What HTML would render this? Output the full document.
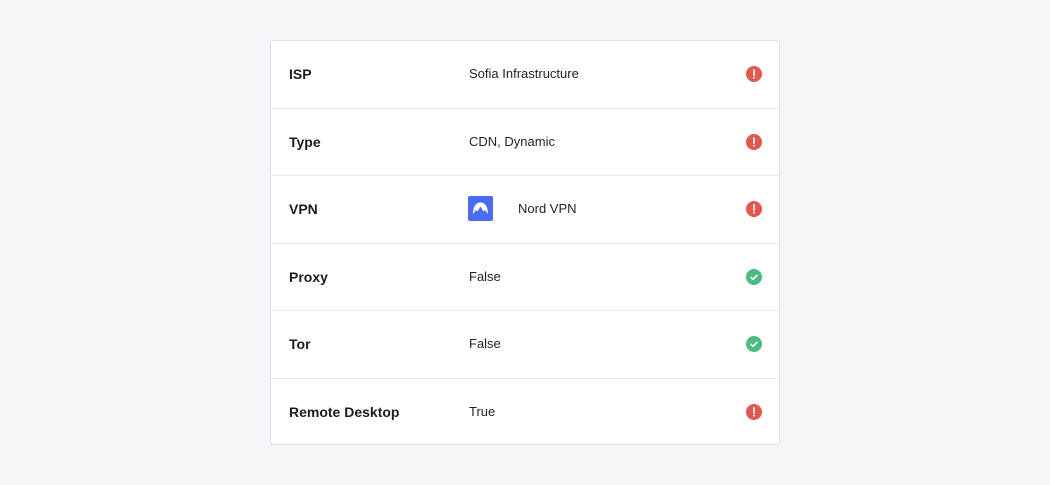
<!DOCTYPE html>
<html><head><style>
body{margin:0;width:1050px;height:485px;background:#f4f5f9;font-family:"Liberation Sans",sans-serif;position:relative;overflow:hidden}
.card{position:absolute;left:270px;top:40px;width:508px;height:403px;background:#fff;border:1px solid #dfe2ea;border-radius:4px}
.row{position:absolute;left:0;width:508px;height:66.5px;border-bottom:1px solid #e5e8f0}
.row:last-child{border-bottom:none}
.k{position:absolute;left:18px;top:0;line-height:66px;font-size:14px;font-weight:bold;color:#1b1d24}
.v{position:absolute;left:198px;top:0;line-height:66px;font-size:13px;color:#1f2128}
.ic{position:absolute;left:475px;top:25px;width:16px;height:16px;border-radius:50%}
.r{background:#e5574d}.g{background:#4cbb80}
.ic svg{position:absolute;left:0;top:0}
</style></head><body>
<div class="card">
<div class="row" style="top:0"><div class="k">ISP</div><div class="v">Sofia Infrastructure</div><div class="ic r"><svg width="16" height="16"><path d="M8 4v5" stroke="#fff" stroke-width="1.8" stroke-linecap="round"/><circle cx="8" cy="11.6" r="1" fill="#fff"/></svg></div></div>
<div class="row" style="top:67.5px"><div class="k">Type</div><div class="v">CDN, Dynamic</div><div class="ic r"><svg width="16" height="16"><path d="M8 4v5" stroke="#fff" stroke-width="1.8" stroke-linecap="round"/><circle cx="8" cy="11.6" r="1" fill="#fff"/></svg></div></div>
<div class="row" style="top:135px"><div class="k">VPN</div>
<div style="position:absolute;left:197px;top:20px;width:25px;height:25px;background:#4a6cf5;border-radius:2px"><svg width="25" height="25"><path d="M5 18 C5 10 8.5 6.5 12.5 6.5 C16.5 6.5 20 10 20 18 L17 14 L15.5 15.5 L12.5 10.5 L9.5 15.5 L8 14 Z" fill="#fff"/></svg></div>
<div class="v" style="left:247px">Nord VPN</div><div class="ic r"><svg width="16" height="16"><path d="M8 4v5" stroke="#fff" stroke-width="1.8" stroke-linecap="round"/><circle cx="8" cy="11.6" r="1" fill="#fff"/></svg></div></div>
<div class="row" style="top:202.5px"><div class="k">Proxy</div><div class="v">False</div><div class="ic g"><svg width="16" height="16"><path d="M5 8.3l2 2 4-4" stroke="#fff" stroke-width="1.6" fill="none" stroke-linecap="round" stroke-linejoin="round"/></svg></div></div>
<div class="row" style="top:270px"><div class="k">Tor</div><div class="v">False</div><div class="ic g"><svg width="16" height="16"><path d="M5 8.3l2 2 4-4" stroke="#fff" stroke-width="1.6" fill="none" stroke-linecap="round" stroke-linejoin="round"/></svg></div></div>
<div class="row" style="top:337.5px"><div class="k">Remote Desktop</div><div class="v">True</div><div class="ic r"><svg width="16" height="16"><path d="M8 4v5" stroke="#fff" stroke-width="1.8" stroke-linecap="round"/><circle cx="8" cy="11.6" r="1" fill="#fff"/></svg></div></div>
</div>
</body></html>
